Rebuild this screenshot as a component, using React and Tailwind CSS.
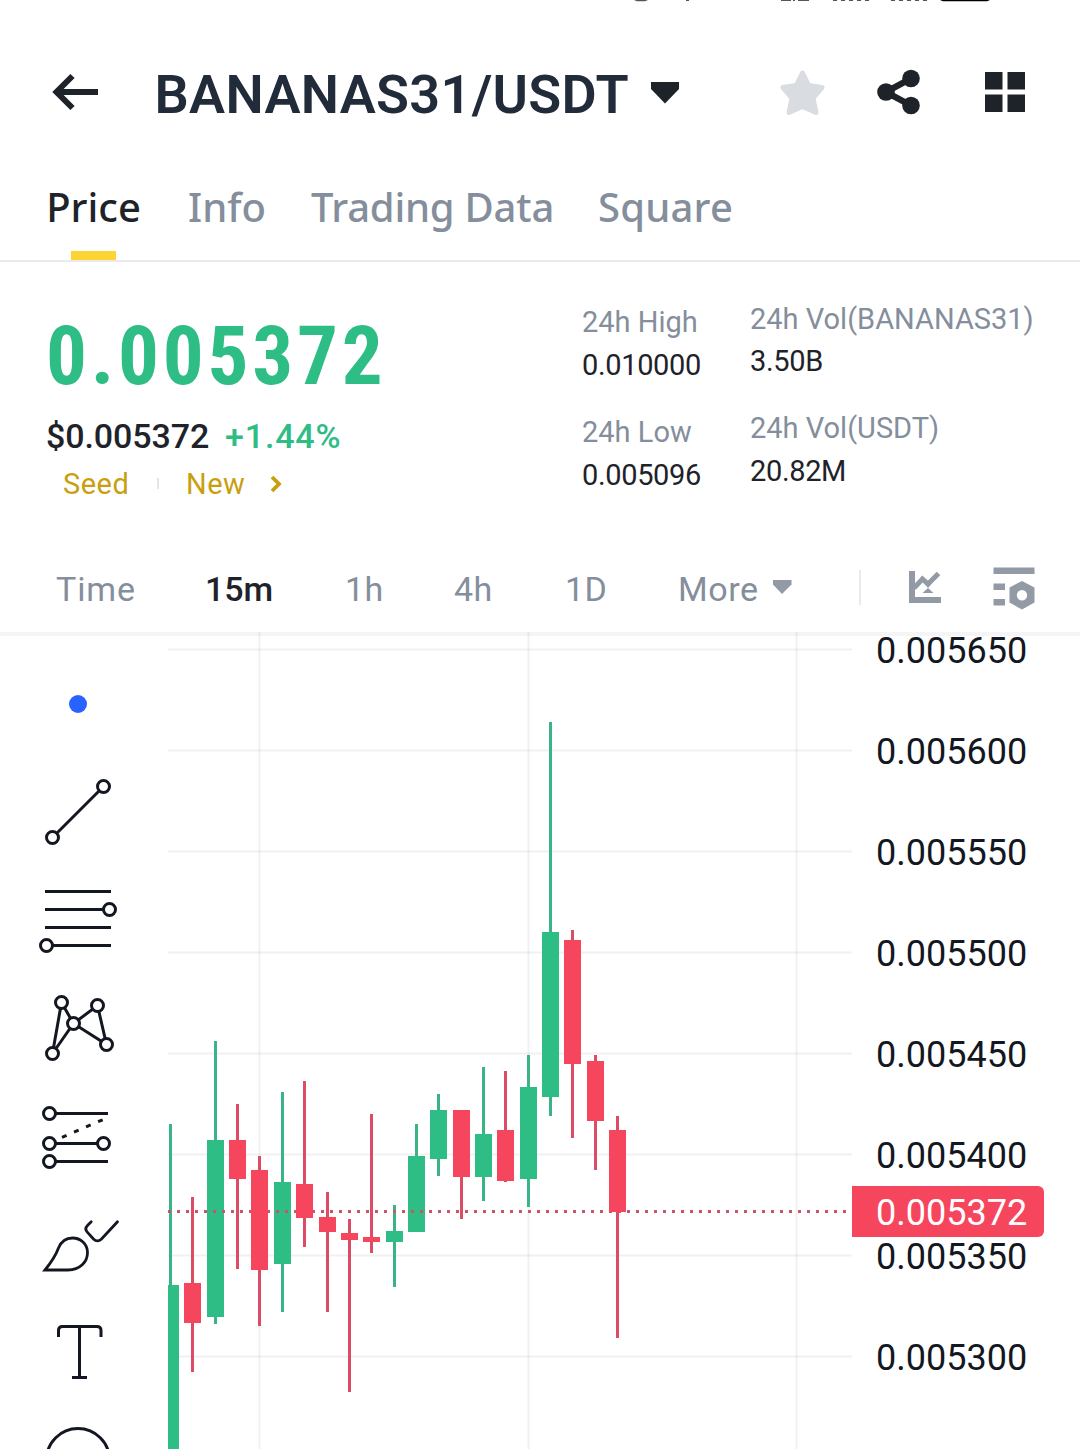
const GREEN = "#2ebd85";
const RED = "#f6465d";

// [x, bodyTop, bodyBottom, wickTop, wickBottom, isUp]
const candles = [
  [162, 1285, 1460, 1124, 1460, true],
  [184, 1283, 1323, 1197, 1372, false],
  [207, 1140, 1317, 1041, 1324, true],
  [229, 1140, 1179, 1104, 1269, false],
  [251, 1170, 1270, 1156, 1326, false],
  [274, 1182, 1264, 1092, 1312, true],
  [296, 1184, 1218, 1081, 1247, false],
  [319, 1217, 1232, 1192, 1312, false],
  [341, 1233, 1240, 1219, 1392, false],
  [363, 1237, 1242, 1114, 1253, false],
  [386, 1231, 1242, 1205, 1287, true],
  [408, 1156, 1232, 1124, 1232, true],
  [430, 1110, 1159, 1094, 1176, true],
  [453, 1110, 1177, 1110, 1219, false],
  [475, 1134, 1177, 1067, 1201, true],
  [497, 1130, 1181, 1071, 1182, false],
  [520, 1087, 1179, 1055, 1207, true],
  [542, 932, 1097, 722, 1116, true],
  [564, 940, 1064, 930, 1138, false],
  [587, 1061, 1121, 1055, 1170, false],
  [609, 1130, 1212, 1116, 1338, false],
];

const axisLabels = [
  "0.005650", "0.005600", "0.005550", "0.005500",
  "0.005450", "0.005400", "0.005350", "0.005300",
];

function Candles({ up }) {
  return candles
    .filter((c) => c[5] === up)
    .map(([x, top, bottom, wickTop, wickBottom]) => (
      <g key={x}>
        <rect x={x + 7} y={wickTop} width="3" height={wickBottom - wickTop} fill={up ? "#3ab487" : "#dd4c65"} />
        <rect x={x} y={top} width="17" height={bottom - top} fill={up ? GREEN : RED} />
      </g>
    ));
}

function Chart() {
  return (
    <svg width="684" height="817" viewBox="168 632 684 817" className="block shrink-0">
      <g fill="#36454f" fillOpacity="0.075">
        {axisLabels.map((label, i) => (
          <rect key={label} x="168" y={648.5 + i * 101} width="684" height="2" />
        ))}
        {[258.5, 527.5, 795.5].map((x) => (
          <rect key={x} x={x} y="632" width="2" height="817" />
        ))}
      </g>
      <g shapeRendering="crispEdges">
        <Candles up />
        <line x1="168" y1="1211.5" x2="852" y2="1211.5" stroke="#cc5468" strokeWidth="3" strokeDasharray="3 6" />
        <Candles up={false} />
      </g>
    </svg>
  );
}

function Tool({ y, height = 108, children }) {
  return (
    <svg
      width="168"
      height={height}
      viewBox={`0 ${y} 168 ${height}`}
      fill="none"
      stroke="#131722"
      strokeWidth="3"
      className="block shrink-0"
    >
      {children}
    </svg>
  );
}

function Node({ x, y }) {
  return <circle cx={x} cy={y} r="6" fill="#fff" />;
}

function Toolbar() {
  return (
    <aside className="flex w-[168px] shrink-0 flex-col pt-[18px]">
      <Tool y={650}>
        <circle cx="78" cy="704" r="9" fill="#2962ff" stroke="none" />
      </Tool>
      <Tool y={758}>
        <path d="M52.5 837.5 L103.5 786.5" />
        <Node x={52.5} y={837.5} />
        <Node x={103.5} y={786.5} />
      </Tool>
      <Tool y={866}>
        <path d="M45 891.5H111M45 909.5H109M45 927.5H111M46 945.5H111" />
        <Node x={109.5} y={909.5} />
        <Node x={46.5} y={945.5} />
      </Tool>
      <Tool y={974}>
        <path d="M52.5 1053.5L61.5 1002.5L73.5 1023.5L106.5 1044.5L97.5 1005.5L73.5 1023.5Z" />
        <Node x={61.5} y={1002.5} />
        <Node x={97.5} y={1005.5} />
        <Node x={73.5} y={1023.5} />
        <Node x={106.5} y={1044.5} />
        <Node x={52.5} y={1053.5} />
      </Tool>
      <Tool y={1082}>
        <path d="M49 1113.5H108M49 1143.5H103M49 1161.5H108" />
        <path d="M62 1137.3L104 1119.2" strokeDasharray="5 8.1" />
        <Node x={49.5} y={1113.5} />
        <Node x={49.5} y={1143.5} />
        <Node x={103.5} y={1143.5} />
        <Node x={49.5} y={1161.5} />
      </Tool>
      <Tool y={1190}>
        <path
          strokeWidth="2.8"
          d="M45 1270H68C80 1270 87.500 1262 87.500 1252.500C87.500 1244 80.500 1238 72.500 1238C65.500 1238 61 1242 58.500 1248C55.500 1256 51.500 1262 45 1270Z"
        />
        <path
          strokeWidth="2.8"
          strokeLinecap="round"
          d="M91.200 1221.700L87.500 1225.400C85.300 1227.600 85.300 1230 87.500 1232.400L93.500 1239C96 1241.600 98.800 1241.600 101.500 1239L117.500 1221.700"
        />
      </Tool>
      <Tool y={1298}>
        <path d="M58.500 1337V1330.500Q58.500 1326.500 62.500 1326.500H97Q101 1326.500 101 1330.500V1337M79.500 1326.500V1377.500M72 1377.500H87" />
      </Tool>
      <Tool y={1406} height={43}>
        <circle cx="78" cy="1460" r="31.500" />
      </Tool>
    </aside>
  );
}

function StatusBar() {
  return (
    <svg width="1080" height="46" viewBox="0 0 1080 46" className="block shrink-0">
      <g fill="#555">
        <path d="M634 0h14l-3 1.300h-8z" />
        <rect x="686" y="0" width="3" height="1" />
        <rect x="781" y="0" width="10" height="1" />
        <rect x="793" y="0" width="2" height="1" />
        <rect x="798" y="0" width="11" height="1" />
        {[833, 841, 849, 857, 865, 891, 899, 907, 915, 923].map((x) => (
          <rect key={x} x={x} y="0" width="4" height="1" />
        ))}
      </g>
      <path d="M940 0H990L987 1.300H943Z" fill="#000" />
    </svg>
  );
}

function Header() {
  return (
    <header className="flex h-[92px] items-center text-[#1e2329]">
      <svg width="152" height="46" viewBox="0 69 152 46" fill="none" stroke="#1e2329" strokeWidth="6" className="shrink-0">
        <path d="M98 92H57M72.500 76L56.500 92L72.500 108" />
      </svg>
      <h1 className="w-[499px] shrink-0 whitespace-nowrap pl-[2.5px] pt-[5px] text-[54px] font-semibold leading-none tracking-[0.3px] text-[#222b3a]">
        BANANAS31/USDT
      </h1>
      <svg width="129" height="46" viewBox="651 69 129 46" fill="#1e2329" className="shrink-0">
        <path d="M651 82H679V89L665 103.500L651 89Z" />
      </svg>
      <svg width="96" height="50" viewBox="780.500 67 96 50" className="shrink-0">
        <path
          d="M803 73L809.200 85.500L822.500 87.500L813.500 98L816.500 112.500L803 106.500L789.500 112.500L792.500 98L783.500 87.500L796.800 85.500Z"
          fill="#d9dce1"
          stroke="#d9dce1"
          strokeWidth="5"
          strokeLinejoin="round"
        />
      </svg>
      <svg width="108" height="50" viewBox="876.500 67 108 50" fill="#1e2329" stroke="#1e2329" className="shrink-0">
        <path d="M911.500 78.500L886.500 92L911.500 105.500" fill="none" strokeWidth="6.500" />
        <circle cx="911.500" cy="78.500" r="8.800" stroke="none" />
        <circle cx="886.500" cy="92" r="8.800" stroke="none" />
        <circle cx="911.500" cy="105.500" r="8.800" stroke="none" />
      </svg>
      <svg width="44" height="46" viewBox="984 69 44 46" fill="#1e2329" className="shrink-0">
        <path d="M985 72h17.500v17.500H985zM1007.500 72H1025v17.500h-17.500zM985 94.500h17.500V112H985zM1007.500 94.500H1025V112h-17.500z" />
      </svg>
    </header>
  );
}

function Tabs() {
  return (
    <nav className="flex h-[124px] border-b-2 border-[#eaeaea] pl-[45px] pt-[48.5px] font-['Noto_Sans',sans-serif] text-[40px] font-medium leading-none text-[#848e9c]">
      <div className="flex w-[97px] shrink-0 flex-col items-center text-[#1e2329]">
        <span>Price</span>
        <span className="mt-[24.5px] h-[9px] w-[45px] bg-[#fcd535]" />
      </div>
      <span className="ml-[46px] w-[123px] shrink-0">Info</span>
      <span className="w-[287px] shrink-0 whitespace-nowrap tracking-[-0.22px]">Trading Data</span>
      <span className="shrink-0 tracking-[0.2px]">Square</span>
    </nav>
  );
}

function Stat({ label, value, className = "" }) {
  return (
    <div className={`flex flex-col whitespace-nowrap ${className}`}>
      <span className="text-[#848e9c]">{label}</span>
      <span className="text-[#1e2329] tracking-[-0.35px]">{value}</span>
    </div>
  );
}

function Summary() {
  return (
    <section className="flex h-[282px] text-[29px] leading-none">
      <div className="w-[536px] shrink-0 pl-[46px] pt-[54px]">
        <div className="text-[81px] font-bold leading-none tracking-[3.8px] text-[#2ebd85] [font-stretch:75%]">0.005372</div>
        <div className="mt-[22px] flex text-[34px] font-medium leading-none">
          <span className="w-[179px] shrink-0 text-[#1e2329] tracking-[-0.09px]">$0.005372</span>
          <span className="tracking-[0.84px] text-[#2ebd85]">+1.44%</span>
        </div>
        <div className="mt-[15px] flex items-center pl-[17px] text-[#c99f10]">
          <span className="w-[94px] pt-0.5 tracking-[0.5px]">Seed</span>
          <span className="h-[11px] w-[2px] bg-[#e4e5e7]" />
          <span className="ml-[27px] w-[84px] pt-0.5 tracking-[0.47px]">New</span>
          <svg width="12" height="18" viewBox="0 0 12 18" fill="none" stroke="#c99f10" strokeWidth="3.800">
            <path d="M2 2L9 9L2 16" />
          </svg>
        </div>
      </div>
      <div className="ml-[46px] flex w-[168px] shrink-0 flex-col gap-[38px] pt-[46px]">
        <Stat className="gap-3.5" label="24h High" value="0.010000" />
        <Stat className="gap-3.5" label="24h Low" value="0.005096" />
      </div>
      <div className="flex flex-col gap-[38px] pt-[43px]">
        <Stat className="gap-[13px]" label="24h Vol(BANANAS31)" value="3.50B" />
        <Stat className="gap-3.5" label="24h Vol(USDT)" value="20.82M" />
      </div>
    </section>
  );
}

function IntervalBar() {
  return (
    <div className="flex h-[92px] items-center border-b-4 border-[#f5f5f5] pl-[56px] text-[34px] leading-none text-[#848e9c]">
      <span className="w-[149px] shrink-0 pt-0.5 tracking-[0.88px]">Time</span>
      <span className="w-[140px] shrink-0 pt-0.5 font-medium tracking-[-0.07px] text-[#1e2329]">15m</span>
      <span className="w-[109px] shrink-0 pt-0.5 tracking-[0.39px]">1h</span>
      <span className="w-[111px] shrink-0 pt-0.5 tracking-[0.39px]">4h</span>
      <span className="w-[113px] shrink-0 pt-0.5 tracking-[0.39px]">1D</span>
      <span className="w-[94px] shrink-0 pt-0.5 tracking-[0.57px]">More</span>
      <svg width="87" height="40" viewBox="772 568 87 40" fill="#929aa5" className="shrink-0">
        <path d="M773 580H791.500V584.500L782 594L773 584.500Z" />
      </svg>
      <span className="mb-0.5 h-[35px] w-[2px] shrink-0 bg-[#eaeaea]" />
      <svg width="131" height="44" viewBox="861 566 131 44" fill="#929aa5" className="shrink-0">
        <path d="M909 571H915V597H941V603H909Z" />
        <path d="M914 588L922.500 579L928 584L938.500 573.500" fill="none" stroke="#929aa5" strokeWidth="5" />
        <path d="M925 584H931L928 588ZM928 588L933.500 593H922.500Z" />
      </svg>
      <svg width="44" height="44" viewBox="992 566 44 44" fill="#929aa5" className="shrink-0">
        <path d="M993.500 567.500H1034.500V574H993.500ZM993.500 583.500H1005V590H993.500ZM993.500 599H1005V605.500H993.500Z" />
        <path
          fillRule="evenodd"
          d="M1022 581L1034.500 587.500V602.500L1022 609.500L1009.500 602.500V587.500ZM1022 590A5.200 5.200 0 1 0 1022 600.400A5.200 5.200 0 1 0 1022 590Z"
        />
      </svg>
    </div>
  );
}

function PriceAxis() {
  return (
    <div className="relative flex w-[228px] flex-col gap-[65px] pl-6 pt-px text-[36px] leading-none text-[#131722]">
      {axisLabels.map((label) => (
        <span key={label}>{label}</span>
      ))}
      <span className="absolute left-0 top-[554px] h-[51px] w-[192px] rounded-r-[6px] bg-[#f6465d] pl-6 pt-[9px] text-white">
        0.005372
      </span>
    </div>
  );
}

export default function App() {
  return (
    <div className="flex h-[1449px] w-[1080px] flex-col overflow-hidden bg-white font-['Roboto',sans-serif]">
      <StatusBar />
      <Header />
      <Tabs />
      <Summary />
      <IntervalBar />
      <main className="-mt-1 flex h-[817px] shrink-0">
        <Toolbar />
        <Chart />
        <PriceAxis />
      </main>
    </div>
  );
}
